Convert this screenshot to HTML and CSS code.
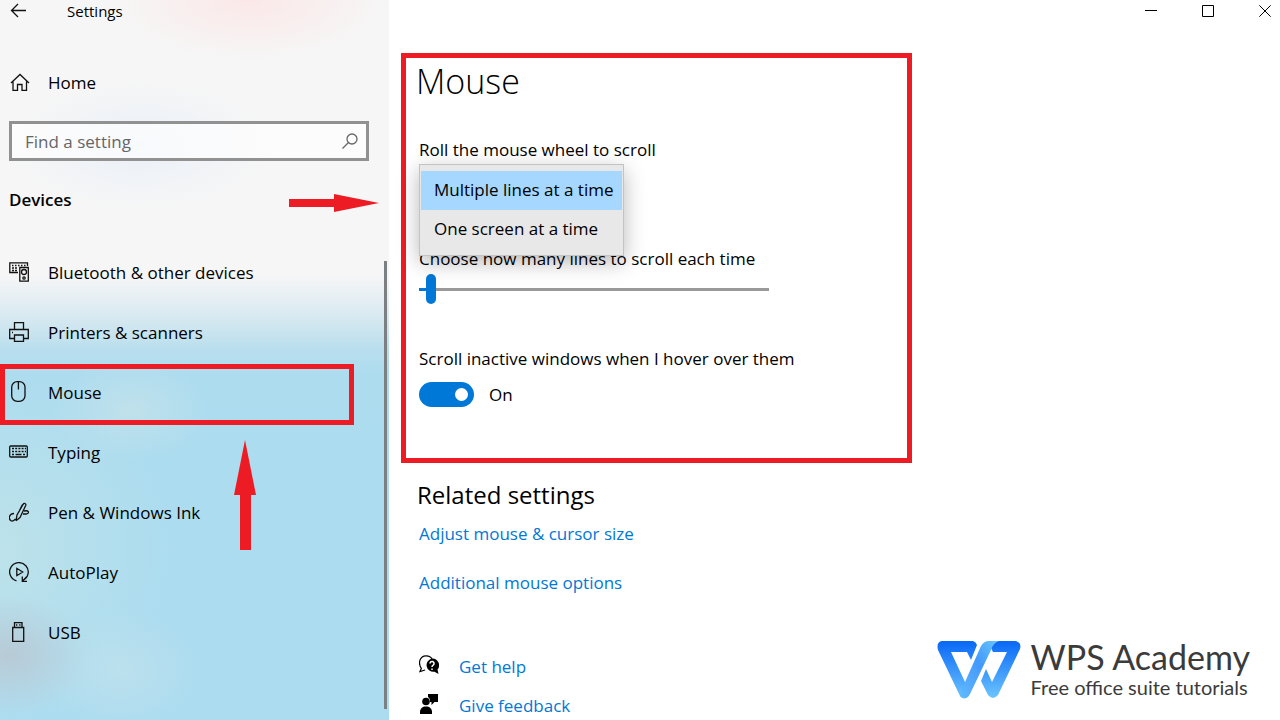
FILE: index.html
```html
<!DOCTYPE html>
<html lang="en">
<head>
<meta charset="utf-8">
<title>Settings</title>
<link rel="stylesheet" href="styles.css">
</head>
<body>
<div class="window">
  <aside class="sidebar">
    <header class="sidebar-title">
      <button class="icon-button" aria-label="Back"><svg class="icon" width="20" height="20" viewBox="0 0 20 20"><path d="M17 9.500H2.500M9 3L2.500 9.500L9 16"/></svg></button>
      <span>Settings</span>
    </header>
    <a class="home" href="#home">
      <svg class="icon" width="20" height="20" viewBox="0 0 20 20"><path d="M2 10L11 1.500L20 10M4 8.500V17.300H8.500V11.500H13V17.300H17.500V8.500"/></svg>
      <span>Home</span>
    </a>
    <div class="search">
      <input type="text" placeholder="Find a setting" aria-label="Find a setting">
      <svg class="icon search-icon" width="18" height="18" viewBox="0 0 18 18"><circle cx="11" cy="6" r="5"/><path d="M7.500 9.500L1.500 15.500"/></svg>
    </div>
    <h2 class="group-title">Devices</h2>
    <nav class="nav">
      <a class="nav-item" href="#bluetooth">
        <svg class="icon" width="20" height="22" viewBox="0 0 20 22"><path d="M9 10.500H.8V.8H18.500V4"/><path d="M3 3.500H17" stroke-dasharray="1.500 1.500"/><path d="M3 6H9M3 8.500H9" stroke-dasharray="2 1"/><path d="M10.800 5.500H19.300V19.200H10.800Z"/><circle cx="15" cy="10" r="2.500"/><circle cx="15" cy="16" r="1.200"/></svg>
        <span>Bluetooth &amp; other devices</span>
      </a>
      <a class="nav-item" href="#printers">
        <svg class="icon" width="20" height="22" viewBox="0 0 20 22"><path d="M5.500 7.500V.7H14.500V7.500M5.500 16.500H.7V7.500H19.300V16.500H14.500M5.500 13H14.500V19.300H5.500ZM3 10.500H4"/></svg>
        <span>Printers &amp; scanners</span>
      </a>
      <a class="nav-item nav-item-marked" href="#mouse" aria-current="page">
        <svg class="icon" width="20" height="24" viewBox="0 0 20 24"><rect x="2.700" y=".7" width="13.300" height="19.600" rx="5.500"/><path d="M9.400 1V8.500"/></svg>
        <span>Mouse</span>
      </a>
      <a class="nav-item" href="#typing">
        <svg class="icon" width="20" height="22" viewBox="0 0 20 22"><rect x=".7" y="4" width="17.600" height="11" rx="1"/><path d="M3 6.500H17M3 9.500H17" stroke-dasharray="2 1.200"/><path d="M3 12.500H5M6.500 12.500H12.500M14 12.500H16"/></svg>
        <span>Typing</span>
      </a>
      <a class="nav-item" href="#pen">
        <svg class="icon" width="20" height="22" viewBox="0 0 20 22"><path d="M7 18.800L8 13L14 2.500C15 .5 17.500 1.500 16.700 3.500L11 15.500L7 18.800M10.500 8.500L13 3.500L15 1.500M5 11.500C-.5 12-.8 17.500 2.500 19C4 19.500 5.500 18 6.500 17M15 9C20 8 21 11 17.500 12H14"/></svg>
        <span>Pen &amp; Windows Ink</span>
      </a>
      <a class="nav-item" href="#autoplay">
        <svg class="icon" width="20" height="22" viewBox="0 0 20 22"><path d="M7.500 18.900A9.300 9.300 0 1 1 14 18.300M18 14.500L13.500 19M13.300 14.500V19.300H18M7.800 6.300V13.700L13.700 10Z"/></svg>
        <span>AutoPlay</span>
      </a>
      <a class="nav-item" href="#usb">
        <svg class="icon" width="20" height="22" viewBox="0 0 20 22"><path d="M5.500 5.500V.7H13V5.500M3.700 5.500H14.700V19.300H3.700ZM7 3H8.300M10.200 3H11.500"/></svg>
        <span>USB</span>
      </a>
    </nav>
    <div class="scrollbar"></div>
    <svg class="arrow-right" width="90" height="18" viewBox="0 0 90 18"><path d="M0 5H45V0L90 9L45 18V13H0Z"/></svg>
    <svg class="arrow-up" width="22" height="110" viewBox="0 0 22 110"><path d="M11 0L22 55H17V110H6V55H0Z"/></svg>
  </aside>

  <main class="main">
    <div class="window-controls">
      <button class="icon-button" aria-label="Minimize"><svg class="control-icon" width="12" height="12" viewBox="0 0 12 12"><path d="M0 5.500H12"/></svg></button>
      <button class="icon-button" aria-label="Maximize"><svg class="control-icon" width="12" height="12" viewBox="0 0 12 12"><path d="M.5 .5H11.500V11.500H.5Z"/></svg></button>
      <button class="icon-button" aria-label="Close"><svg class="control-icon" width="12" height="12" viewBox="0 0 12 12"><path d="M.3 .3L11.700 11.700M11.700 .3L.3 11.700"/></svg></button>
    </div>
    <section class="panel">
      <h1>Mouse</h1>
      <div class="field wheel-field">
        <label for="wheel">Roll the mouse wheel to scroll</label>
        <select id="wheel" size="2">
          <option selected>Multiple lines at a time</option>
          <option>One screen at a time</option>
        </select>
      </div>
      <div class="field lines-field">
        <label for="lines">Choose how many lines to scroll each time</label>
        <input id="lines" type="range" min="1" max="100" value="3">
      </div>
      <div class="field">
        <label for="inactive">Scroll inactive windows when I hover over them</label>
        <div class="toggle-row">
          <input id="inactive" type="checkbox" role="switch" checked>
          <span>On</span>
        </div>
      </div>
    </section>
    <section class="related">
      <h2>Related settings</h2>
      <a href="#cursor">Adjust mouse &amp; cursor size</a>
      <a href="#options">Additional mouse options</a>
    </section>
    <section class="support">
      <a href="#help">
        <svg width="20" height="24" viewBox="0 0 20 24"><path d="M2.500 13.500C-1.500 8 1 1 7 .8C10 .7 12 2 13 4M2.500 13L1 16.500L6 15" fill="none" stroke="#000" stroke-width="1.200"/><path d="M13.200 3.500A6.700 6.700 0 1 0 15.500 16.700L19.500 19L18.500 14.500A6.700 6.700 0 0 0 13.200 3.500Z"/><path d="M11 8.500C11.200 5.800 15.500 6 15 8.800C14.700 10.300 13 10.300 13 12M13 13.500V15" fill="none" stroke="#fff" stroke-width="1.500"/></svg>
        <span>Get help</span>
      </a>
      <a href="#feedback">
        <svg width="20" height="24" viewBox="0 0 20 24"><path d="M9 0H19V8H15.500L12.500 11V8H11A5 5 0 0 0 9 3Z"/><circle cx="7" cy="7.500" r="3.800"/><path d="M1 20V18C1 14.500 3.500 12.500 7 12.500S13 14.500 13 18V20Z"/></svg>
        <span>Give feedback</span>
      </a>
    </section>
  </main>

  <div class="brand">
    <svg width="84" height="58" viewBox="0 0 84 58">
      <defs>
        <linearGradient id="mark" x1="0" y1="0" x2="0" y2="1"><stop offset="0" stop-color="#0968f6"/><stop offset="1" stop-color="#6cc4ff"/></linearGradient>
        <linearGradient id="fold" x1="0" y1="1" x2="1" y2="0"><stop offset="0" stop-color="#62baff"/><stop offset=".55" stop-color="#4499fa"/><stop offset="1" stop-color="#69c7ff"/></linearGradient>
      </defs>
      <path fill="url(#mark)" d="M5 0H36Q39 1 40 4L34 19L30 11H14L28 41L32 49L32 55Q27 60 23 55L1 9Q-1 1 5 0Z"/>
      <path fill="url(#mark)" d="M55 0H78Q85 1 83 8L61 54Q56 60 51 54L44 40L49 28L55 41L70 11H56L52 3Z"/>
      <path fill="url(#fold)" d="M23 55L28 41L44 5Q47 0 52 0H62Q56 2 54 9L33 53Q28 60 23 55Z"/>
    </svg>
    <div class="brand-text">
      <span class="brand-name">WPS Academy</span>
      <span class="brand-tagline">Free office suite tutorials</span>
    </div>
  </div>
</div>
</body>
</html>
```
FILE: styles.css
```css
* { box-sizing: border-box; }

body {
  margin: 0;
  background: #fff;
  color: #000;
  font: 17px/24px "Open Sans", "Noto Sans", sans-serif;
}

h1, h2 { margin: 0; font-weight: 400; }
a { text-decoration: none; }
input, select, button { font: inherit; margin: 0; }

.window {
  position: relative;
  display: flex;
  min-height: 100vh;
  overflow: hidden;
}

.icon-button {
  display: grid;
  place-items: center;
  padding: 0;
  border: 0;
  background: none;
}

.icon { fill: none; stroke: #111; stroke-width: 1.3; flex: none; }
.control-icon { fill: none; stroke: #000; stroke-width: 1; }

.sidebar {
  position: relative;
  flex: 0 0 389px;
  background:
    radial-gradient(140px 60px at 250px 0, #fbe8e8, #fbe8e800),
    radial-gradient(130px 65px at 140px 145px, #eaf0f8, #eaf0f800),
    radial-gradient(80px 60px at 10px 655px, #b8cad6, #b8cad600),
    radial-gradient(80px 50px at 130px 410px, #c0e1eb, #c0e1eb00),
    radial-gradient(170px 180px at 0 550px, #bde2ea, #bde2ea00),
    radial-gradient(80px 60px at 120px 670px, #bce0ed, #bce0ed00),
    linear-gradient(#f6f6f6 0, #f6f6f6 275px, #e6eff4 298px, #d5e8f0 320px, #b8deed 350px, #addcef 375px, #acdcf0 100%);
}

.sidebar-title {
  display: flex;
  align-items: center;
  gap: 38px;
  height: 22px;
  padding-left: 9px;
  font-size: 15px;
}

.home, .nav-item {
  display: flex;
  align-items: center;
  gap: 19px;
  padding-left: 9px;
  color: #000;
}

.home { height: 60px; margin-top: 31px; }
.home .icon { overflow: visible; }

.search {
  display: flex;
  align-items: center;
  height: 40px;
  margin: 8px 20px 0 9px;
  padding: 1px 7px 0 13px;
  border: 3px solid #919191;
  background: #ffffffa0;
}

.search input {
  flex: 1;
  min-width: 0;
  padding: 0;
  border: 0;
  outline: 0;
  background: none;
}

.search input::placeholder { color: #666; }
.search-icon { stroke: #666; }

.group-title {
  margin: 27px 0 0 9px;
  font-size: 17px;
  line-height: 24px;
  font-weight: 600;
}

.nav { margin-top: 31px; }
.nav-item { position: relative; height: 60px; }

.nav-item-marked::after {
  content: "";
  position: absolute;
  inset: 1px 35px -2px 0;
  border: 5px solid #ed1c24;
}

.scrollbar {
  position: absolute;
  top: 261px;
  right: 2px;
  bottom: 11px;
  width: 3px;
  background: #7d8083;
}

.arrow-right, .arrow-up { position: absolute; fill: #ed1c24; }
.arrow-right { top: 194px; left: 289px; }
.arrow-up { top: 440px; left: 234px; }

.main {
  flex: 1;
  min-width: 0;
  padding-left: 12px;
}

.window-controls {
  display: flex;
  justify-content: flex-end;
  gap: 33px;
  height: 22px;
  padding-right: 3px;
}

.window-controls .icon-button { width: 24px; }

.panel {
  max-width: 511px;
  margin-top: 31px;
  padding: 0 13px 51px;
  border: 5px solid #ed1c24;
}

.panel h1 {
  margin-left: -3px;
  font-size: 34px;
  line-height: 46px;
  font-weight: 300;
}

.field { display: flex; flex-direction: column; align-items: flex-start; }
.wheel-field { position: relative; height: 109px; margin-top: 34px; }
.lines-field { margin-bottom: 43px; }

.wheel-field select {
  position: absolute;
  top: 26px;
  left: 0;
  width: 205px;
  height: 92px;
  padding: 6px 1px;
  border: 1px solid #c3c3c3;
  border-radius: 0;
  outline: 0;
  overflow: hidden;
  background: #e8e8e8;
  color: #000;
  box-shadow: 0 6px 20px #00000048;
}

.wheel-field option {
  height: 39px;
  padding: 7px 13px;
  color: #000;
}

.wheel-field option:checked { background: linear-gradient(#a5d7ff, #a5d7ff); }

.lines-field input {
  appearance: none;
  width: 350px;
  max-width: 100%;
  height: 30px;
  margin-top: 3px;
  background: linear-gradient(90deg, #0078d7 12px, #999 12px) center / 100% 3px no-repeat;
}

.lines-field input::-webkit-slider-thumb {
  appearance: none;
  width: 10px;
  height: 30px;
  border-radius: 5px;
  background: #0078d7;
}

.toggle-row { display: flex; align-items: center; gap: 15px; margin-top: 11px; }

.toggle-row input {
  appearance: none;
  display: flex;
  align-items: center;
  justify-content: flex-end;
  width: 55px;
  height: 25px;
  padding-right: 6px;
  border-radius: 13px;
  background: #0078d7;
}

.toggle-row input::before {
  content: "";
  width: 13px;
  height: 13px;
  border-radius: 50%;
  background: #fff;
}

.related, .support {
  display: flex;
  flex-direction: column;
  align-items: flex-start;
  padding-left: 18px;
}

.related { gap: 25px; margin-top: 16px; }

.related h2 {
  margin: 0 0 -14px -2px;
  font-size: 24px;
  line-height: 32px;
}

.related a, .support a { color: #0078d7; }
.support { gap: 15px; margin-top: 60px; }
.support a { display: flex; align-items: center; gap: 20px; }

.brand {
  position: absolute;
  right: 30px;
  bottom: 20px;
  display: flex;
  align-items: center;
  gap: 10px;
  color: #3b3b3b;
}

.brand-text { display: flex; flex-direction: column; }
.brand-name { font: 34px/34px Lato, sans-serif; }
.brand-tagline { font: 20px/26px Lato, sans-serif; }
```
